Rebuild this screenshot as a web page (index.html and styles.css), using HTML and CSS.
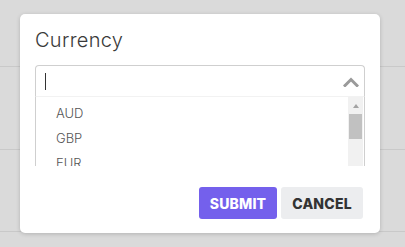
FILE: index.html
```html
<!DOCTYPE html>
<html>
<head>
<meta charset="utf-8">
<link rel="stylesheet" href="styles.css">
</head>
<body>
<div class="backdrop">
  <div class="row r1"></div>
  <div class="row r2"></div>
  <div class="row r3"></div>
</div>
<div class="dialog">
  <h2 class="title">Currency</h2>
  <div class="combo">
    <div class="input">
      <span class="caret"></span>
      <svg class="chev" width="16" height="10" viewBox="0 0 16 10"><path d="M2 8.5 L8 2.5 L14 8.5" fill="none" stroke="#9a9a9a" stroke-width="3" stroke-linecap="square"/></svg>
    </div>
    <div class="list">
      <ul class="items">
        <li>AUD</li>
        <li>GBP</li>
        <li>EUR</li>
      </ul>
      <div class="scrollbar">
        <span class="arrow"></span>
        <span class="thumb"></span>
      </div>
    </div>
  </div>
  <div class="actions">
    <button class="btn submit">SUBMIT</button>
    <button class="btn cancel">CANCEL</button>
  </div>
</div>
</body>
</html>
```
FILE: styles.css
```css
html, body {
  margin: 0;
  padding: 0;
}
body {
  width: 405px;
  height: 247px;
  background: #dadada;
  font-family: Inter, "Noto Sans", sans-serif;
  overflow: hidden;
  position: relative;
}
.backdrop {
  display: flex;
  flex-direction: column;
}
.row {
  border-bottom: 1px solid #c9c9c9;
}
.r1 { height: 66px; }
.r2 { height: 82px; }
.r3 { height: 81px; }
.dialog {
  position: absolute;
  left: 20px;
  top: 14px;
  width: 360px;
  height: 219px;
  box-sizing: border-box;
  background: #fff;
  border-radius: 5px;
  box-shadow: 0 1px 4px rgba(0,0,0,0.18);
  padding: 14px 17px 0 15px;
  display: flex;
  flex-direction: column;
}
.title {
  margin: 0;
  font-size: 20px;
  line-height: 24px;
  font-weight: 300;
  color: #3a3a3a;
  letter-spacing: 0.3px;
}
.combo {
  margin-top: 13px;
  width: 330px;
}
.input {
  height: 30px;
  border: 1px solid #cfcfcf;
  border-bottom: 1px solid #f2f2f2;
  border-radius: 4px 4px 0 0;
  display: flex;
  align-items: center;
  justify-content: space-between;
  padding: 0 5px 0 9px;
}
.caret {
  width: 1px;
  height: 17px;
  background: #333;
}
.chev {
  margin-top: 2px;
}
.list {
  height: 69px;
  border-left: 1px solid #cfcfcf;
  border-right: 1px solid #cfcfcf;
  display: flex;
  overflow: hidden;
}
.items {
  list-style: none;
  margin: 0;
  padding: 4px 0 0 20px;
  flex: 1;
}
.items li {
  height: 25px;
  line-height: 25px;
  font-size: 13px;
  font-weight: 300;
  color: #555;
}
.scrollbar {
  width: 15px;
  margin-right: 1px;
  background: #f1f1f1;
  display: flex;
  flex-direction: column;
  align-items: center;
}
.arrow {
  margin-top: 7px;
  width: 0;
  height: 0;
  border-left: 3.5px solid transparent;
  border-right: 3.5px solid transparent;
  border-bottom: 4px solid #a3a3a3;
}
.thumb {
  margin-top: 6px;
  width: 13px;
  height: 25px;
  background: #c1c1c1;
}
.actions {
  margin-top: 21px;
  display: flex;
  justify-content: flex-end;
  gap: 4px;
}
.btn {
  height: 32px;
  border: none;
  border-radius: 3px;
  font-family: Inter, "Noto Sans", sans-serif;
  font-size: 14px;
  font-weight: 800;
  letter-spacing: 0.2px;
  padding: 0;
}
.submit {
  width: 78px;
  background: #7460ec;
  color: #fff;
}
.cancel {
  width: 82px;
  background: #ecedef;
  color: #333;
}
```
